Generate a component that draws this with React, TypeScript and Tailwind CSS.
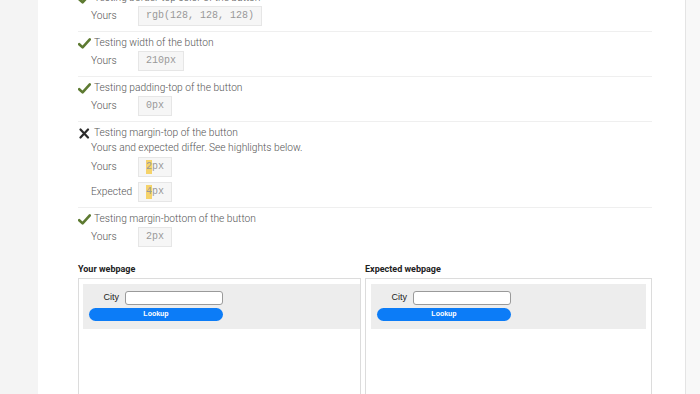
import type { ReactNode } from 'react';

function Check() {
  return (
    <svg width="13" height="11" viewBox="0 0 13 11" className="shrink-0">
      <path d="M1.2 6.2 L4.6 9.4 L11.8 1.4" fill="none" stroke="#5d7a31" strokeWidth="2.6" strokeLinecap="round" strokeLinejoin="round" />
    </svg>
  );
}

function Cross() {
  return (
    <svg width="13" height="11" viewBox="0 0 13 11" className="shrink-0">
      <path d="M2.5 1.5 L10 9.5 M10 1.5 L2.5 9.5" fill="none" stroke="#2b2b2b" strokeWidth="2.2" strokeLinecap="round" />
    </svg>
  );
}

function Code({ children }: { children: ReactNode }) {
  return (
    <span className="inline-flex items-center h-5 px-[7px] bg-[#f6f6f6] border border-[#e6e6e6] text-[10px] text-[#999] font-['Liberation_Mono',monospace]">
      {children}
    </span>
  );
}

function ValueRow({ label, children }: { label: string; children: ReactNode }) {
  return (
    <div className="flex items-center h-5 pl-[13px]">
      <span className="w-[47px]">{label}</span>
      <Code>{children}</Code>
    </div>
  );
}

function Test({ ok, title, children }: { ok: boolean; title: string; children: ReactNode }) {
  return (
    <div className="pt-1 pb-[5px] border-b border-[#efefef] last:border-b-0">
      <div className="flex items-center gap-[3px] h-[14px]">
        {ok ? <Check /> : <Cross />}
        <span>{title}</span>
      </div>
      <div className="mt-px flex flex-col gap-[5px]">{children}</div>
    </div>
  );
}

const Hl = ({ c }: { c: string }) => <span className="bg-[#f5d36a] text-[#999]">{c}</span>;

function Preview({ title, flush }: { title: string; flush?: boolean }) {
  return (
    <div className="flex flex-col">
      <div className="h-[14px] text-[9px] font-bold text-[#222] leading-[14px] mb-[2px]">{title}</div>
      <div className={flush ? 'border border-[#dcdcdc] border-b-0 h-[120px] pt-[5px] pl-[4px]' : 'border border-[#dcdcdc] border-b-0 h-[120px] pt-[5px] px-[5px]'}>
        <div className="bg-[#ededed] h-[45px] pl-[6px] pt-[7px] font-['Liberation_Sans',Arial,sans-serif]">
          <div className="flex items-center w-[134px] justify-end gap-[6px]">
            <span className="text-[9px] text-[#222]">City</span>
            <div className="w-[98px] h-[14px] bg-white border border-[#9a9a9a] rounded-[3px]" />
          </div>
          <div className="mt-[3px] w-[134px] h-[13px] rounded-full bg-[#0c7cf7] text-white text-[7px] font-bold flex items-center justify-center">
            Lookup
          </div>
        </div>
      </div>
    </div>
  );
}

export default function App() {
  return (
    <div className="w-[700px] h-[394px] overflow-hidden flex bg-[#f4f4f4] font-['Roboto',sans-serif]">
      <div className="w-[38px] shrink-0" />
      <div className="w-[648px] shrink-0 bg-white border-r border-[#e4e4e4] pl-[40px] pr-[33px]">
        <div className="mt-[-13px] text-[10.2px] font-light text-[#555] leading-[14px]">
          <Test ok title="Testing border-top color of the button">
            <ValueRow label="Yours">rgb(128, 128, 128)</ValueRow>
          </Test>
          <Test ok title="Testing width of the button">
            <ValueRow label="Yours">210px</ValueRow>
          </Test>
          <Test ok title="Testing padding-top of the button">
            <ValueRow label="Yours">0px</ValueRow>
          </Test>
          <Test ok={false} title="Testing margin-top of the button">
            <div className="pl-[13px] -mb-[3px]">Yours and expected differ. See highlights below.</div>
            <ValueRow label="Yours">
              <Hl c="2" />px
            </ValueRow>
            <ValueRow label="Expected">
              <Hl c="4" />px
            </ValueRow>
          </Test>
          <Test ok title="Testing margin-bottom of the button">
            <ValueRow label="Yours">2px</ValueRow>
          </Test>
        </div>
        <div className="mt-[10px] grid grid-cols-[283px_1fr] gap-1">
          <Preview title="Your webpage" flush />
          <Preview title="Expected webpage" />
        </div>
      </div>
      <div className="flex-1 bg-[#f8f8f8]" />
    </div>
  );
}
